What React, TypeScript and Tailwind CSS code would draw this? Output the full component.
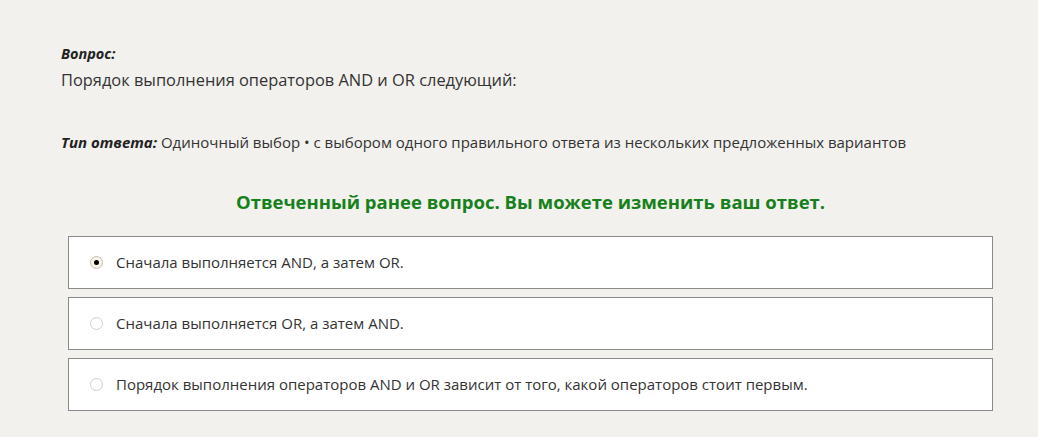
export default function App() {
  const options = [
    { text: "Сначала выполняется AND, а затем OR.", checked: true },
    { text: "Сначала выполняется OR, а затем AND.", checked: false },
    {
      text: "Порядок выполнения операторов AND и OR зависит от того, какой операторов стоит первым.",
      checked: false,
    },
  ];

  return (
    <div
      className="min-h-[437px] w-full bg-[#f2f1ee] text-[#333333]"
      style={{ fontFamily: '"Open Sans", "Noto Sans", sans-serif' }}
    >
      <div className="pl-[61px] pr-[45px] pt-[44px]">
        {/* Question */}
        <div className="text-[14.5px] leading-[20px] font-bold italic text-[#222222]">Вопрос:</div>
        <div className="mt-[4px] text-[16.4px] leading-[24px] text-[#333333]">
          Порядок выполнения операторов AND и OR следующий:
        </div>

        {/* Answer type */}
        <div className="mt-[39px] text-[15px] leading-[22px]">
          <span className="font-bold italic text-[#222222]">Тип ответа:</span>{" "}
          Одиночный выбор • с выбором одного правильного ответа из нескольких предложенных вариантов
        </div>

        {/* Notice */}
        <div className="mt-[36px] pl-[7px] text-center text-[18.5px] leading-[26px] font-bold text-[#16801a]">
          Отвеченный ранее вопрос. Вы можете изменить ваш ответ.
        </div>

        {/* Options */}
        <div className="mt-[21px] ml-[7px] flex flex-col gap-[8px]">
          {options.map((o) => (
            <label
              key={o.text}
              className="flex h-[53px] items-center gap-[13px] border border-[#8a8a8a] bg-white pl-[21px] text-[15px] text-[#333333]"
            >
              <span
                className={
                  o.checked
                    ? "flex h-[13px] w-[13px] items-center justify-center rounded-full border border-[#c9bfa8] bg-[#f6f3ec]"
                    : "h-[13px] w-[13px] rounded-full border border-[#cfcfcf] bg-white"
                }
              >
                {o.checked && <span className="h-[5px] w-[5px] rounded-full bg-black" />}
              </span>
              <span>{o.text}</span>
            </label>
          ))}
        </div>
      </div>
    </div>
  );
}
